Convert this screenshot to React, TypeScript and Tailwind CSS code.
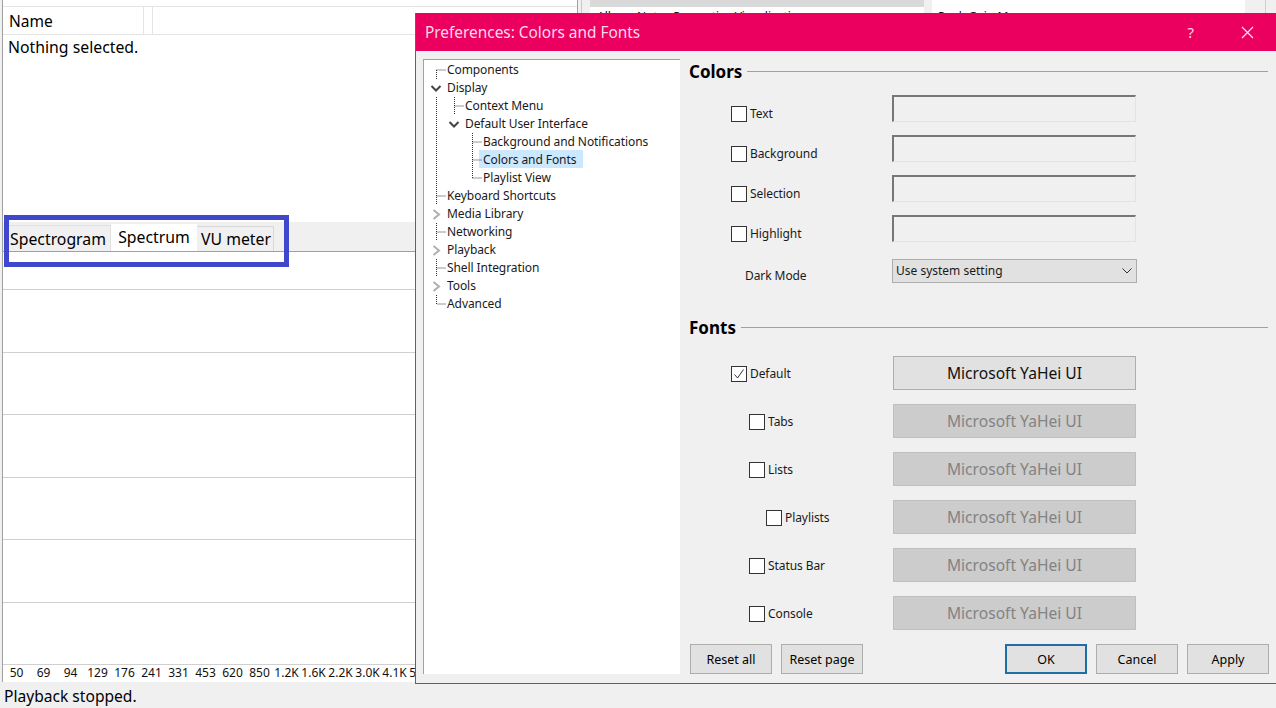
import React from "react";

const uiFont = "font-['Noto_Sans','Open_Sans',sans-serif]";

const gridRows = [38, 63, 62, 63, 62, 63, 62];
const axisLabels = ["50", "69", "94", "129", "176", "241", "331", "453", "620", "850", "1.2K", "1.6K", "2.2K", "3.0K", "4.1K", "5.6K"];

const treeItems = [
  { label: "Components", pad: "pl-[20px]" },
  { label: "Display", pad: "pl-[20px]" },
  { label: "Context Menu", pad: "pl-[38px]" },
  { label: "Default User Interface", pad: "pl-[38px]" },
  { label: "Background and Notifications", pad: "pl-[56px]" },
  { label: "Colors and Fonts", pad: "pl-[56px]", selected: true },
  { label: "Playlist View", pad: "pl-[56px]" },
  { label: "Keyboard Shortcuts", pad: "pl-[20px]" },
  { label: "Media Library", pad: "pl-[20px]" },
  { label: "Networking", pad: "pl-[20px]" },
  { label: "Playback", pad: "pl-[20px]" },
  { label: "Shell Integration", pad: "pl-[20px]" },
  { label: "Tools", pad: "pl-[20px]" },
  { label: "Advanced", pad: "pl-[20px]" },
];

const colorRows = ["Text", "Background", "Selection", "Highlight"];

const fontRows = [
  { label: "Default", pad: "pl-[51px]", checked: true },
  { label: "Tabs", pad: "pl-[69px]" },
  { label: "Lists", pad: "pl-[69px]" },
  { label: "Playlists", pad: "pl-[86px]" },
  { label: "Status Bar", pad: "pl-[69px]" },
  { label: "Console", pad: "pl-[69px]" },
];

const CheckBox = ({ checked = false }: { checked?: boolean }) => (
  <span className="flex h-4 w-4 shrink-0 items-center justify-center border border-[#333] bg-white">
    {checked && (
      <svg width="12" height="12" viewBox="0 0 12 12" fill="none">
        <path d="M1.5 6.5 L4.5 10 L10.5 1.5" stroke="#333" strokeWidth="1" />
      </svg>
    )}
  </span>
);

// dotted guides and expanders of the preferences tree, coordinates are inside the tree box
const TreeGuides = () => (
  <svg className="absolute left-0 top-0" width="100" height="260" fill="none">
    <g stroke="#333" strokeWidth="1" strokeDasharray="1 1">
      <path d="M12.5 10 V19 M12.5 10 H22" />
      <path d="M12.5 37 V145 M12.5 136 H22" />
      <path d="M12.5 163 V181 M12.5 172 H22" />
      <path d="M12.5 199 V217 M12.5 208 H22" />
      <path d="M12.5 235 V244 H22" />
      <path d="M30.5 37 V55 M30.5 46 H40" />
      <path d="M48.5 73 V118 M48.5 82 H58 M48.5 100 H58 M48.5 118 H58" />
    </g>
    <path d="M7.5 26 L12 30.5 L16.5 26" stroke="#444" strokeWidth="2" />
    <path d="M25.5 62 L30 66.5 L34.5 62" stroke="#444" strokeWidth="2" />
    <path d="M9.5 150 L15 154.5 L9.5 159" stroke="#b0b0b0" strokeWidth="2" />
    <path d="M9.5 186 L15 190.5 L9.5 195" stroke="#b0b0b0" strokeWidth="2" />
    <path d="M9.5 222 L15 226.5 L9.5 231" stroke="#b0b0b0" strokeWidth="2" />
  </svg>
);

const SectionTitle = ({ title }: { title: string }) => (
  <div className="flex h-6 items-center gap-[5px] pl-[9px] pr-2">
    <span className="text-[17px] font-bold leading-none tracking-normal text-black">{title}</span>
    <span className="h-px flex-1 bg-[#a0a0a0]" />
  </div>
);

const DialogButton = ({ label, focused = false }: { label: string; focused?: boolean }) => (
  <button
    className={`h-[30px] w-[82px] bg-[#e1e1e1] pt-[2px] text-[12.5px] tracking-normal text-black ${
      focused ? "border-2 border-[#1f6ea8]" : "border border-[#adadad]"
    }`}
  >
    {label}
  </button>
);

const Preferences = () => (
  <div className="absolute left-[415px] top-[13px] flex h-[671px] w-[861px] flex-col overflow-hidden border-b border-l border-[#b8336f] bg-[#f0f0f0] text-[12px] tracking-[-0.08px] text-[#1a1a1a]">
    <div className="flex h-[38px] shrink-0 items-center bg-[#eb005f] pl-[9px] tracking-normal text-white">
      <span className="flex-1 pt-[1px] text-[15.4px] text-[#ffd9e8]">Preferences: Colors and Fonts</span>
      <span className="mr-[47px] text-[15px] text-[#ffd9e8]">?</span>
      <svg className="mr-[22px]" width="13" height="13" viewBox="0 0 13 13" fill="none">
        <path d="M1 1 L12 12 M12 1 L1 12" stroke="#ffe5ef" strokeWidth="1.2" />
      </svg>
    </div>

    <div className="flex flex-1 overflow-hidden">
      <div className="flex w-[264px] shrink-0 pb-[9px] pl-[7px] pt-[8px]">
        <div className="relative flex-1 border-l border-t border-[#a0a0a0] bg-white">
          <TreeGuides />
          {treeItems.map((item) => (
            <div key={item.label} className={`flex h-[18px] items-start ${item.pad}`}>
              <span className={`-ml-[1px] h-[18px] pl-[4px] pt-[1px] leading-[18px] ${item.selected ? "bg-[#cce8ff] pr-[7px]" : "pr-[4px]"}`}>
                {item.label}
              </span>
            </div>
          ))}
        </div>
      </div>

      <div className="flex flex-1 flex-col">
        <div className="pt-[8px]">
          <SectionTitle title="Colors" />
        </div>
        <div className="mt-[12px] flex flex-col">
          {colorRows.map((label) => (
            <div key={label} className="flex h-10">
              <div className="flex h-[38px] w-[212px] shrink-0 items-center gap-[3px] pl-[51px]">
                <CheckBox />
                <span>{label}</span>
              </div>
              <div className="h-[27px] w-[244px] border-b border-l-2 border-r border-t-2 border-b-[#e3e3e3] border-l-[#777] border-r-[#e3e3e3] border-t-[#777]" />
            </div>
          ))}
          <div className="mt-1 flex h-6 items-center">
            <span className="w-[212px] shrink-0 pl-[65px] pt-[10px]">Dark Mode</span>
            <div className="flex h-6 w-[245px] items-center justify-between border border-[#adadad] bg-[#e1e1e1] pl-[3px] pr-[4px] tracking-normal">
              <span>Use system setting</span>
              <svg width="10" height="6" viewBox="0 0 10 6" fill="none">
                <path d="M0.5 0.5 L5 5 L9.5 0.5" stroke="#333" strokeWidth="1" />
              </svg>
            </div>
          </div>
        </div>

        <div className="mt-[32px]">
          <SectionTitle title="Fonts" />
        </div>
        <div className="mt-[17px] flex flex-col">
          {fontRows.map((row) => (
            <div key={row.label} className="flex h-12">
              <div className={`flex h-[36px] w-[213px] shrink-0 items-center gap-[3px] ${row.pad}`}>
                <CheckBox checked={row.checked} />
                <span>{row.label}</span>
              </div>
              <button
                className={`h-[34px] w-[243px] border pt-[2px] text-[15.6px] tracking-normal ${
                  row.checked
                    ? "border-[#adadad] bg-[#e1e1e1] text-[#111]"
                    : "border-[#bfbfbf] bg-[#cccccc] text-[#838383]"
                }`}
              >
                Microsoft YaHei UI
              </button>
            </div>
          ))}
        </div>

        <div className="flex items-center pl-[10px] pr-[7px]">
          <div className="flex gap-[9px]">
            <DialogButton label="Reset all" />
            <DialogButton label="Reset page" />
          </div>
          <div className="ml-[142px] flex gap-[9px]">
            <DialogButton label="OK" focused />
            <DialogButton label="Cancel" />
            <DialogButton label="Apply" />
          </div>
        </div>
      </div>
    </div>
  </div>
);

const App = () => {
  return (
    <div className={`relative flex h-[708px] w-[1276px] flex-col overflow-hidden bg-[#f0f0f0] ${uiFont}`}>
      <div className="flex h-[682px]">
        {/* Playlist side */}
        <div className="ml-[2px] flex w-[576px] shrink-0 flex-col border-l border-r border-[#a0a0a0] bg-white text-black">
          <div className="h-[7px] shrink-0 border-b border-[#e5e5e5]" />
          <div className="flex h-[28px] shrink-0 items-center border-b border-[#e5e5e5]">
            <div className="flex h-full w-[141px] items-center border-r border-[#e5e5e5] pl-[6px] pt-[2px] text-[15.5px]">Name</div>
            <div className="h-full w-[9px] border-r border-[#e5e5e5]" />
          </div>
          <div className="h-[187px] shrink-0 pl-[5px] text-[15.8px] leading-[24px]">Nothing selected.</div>

          <div className="flex h-[30px] shrink-0 items-end border-b border-[#a0a0a0] bg-[#f0f0f0] pl-[3px] text-[15.8px]">
            <div className="flex h-[26px] w-[105px] items-center justify-center border-r border-t border-[#e0e0e0] pt-[2px]">Spectrogram</div>
            <div className="flex h-[27px] w-[86px] items-center justify-center bg-white">Spectrum</div>
            <div className="flex h-[25px] w-[77px] items-center justify-center border-r border-t border-[#d8d8d8] pl-[2px] pt-[2px]">VU meter</div>
          </div>

          <div className="flex flex-1 flex-col">
            {gridRows.map((height, i) => (
              <div key={i} className="shrink-0 border-b border-[#d0d0d0]" style={{ height }} />
            ))}
            <div className="flex h-[17px] whitespace-nowrap text-[12px] leading-[15px] text-[#111]">
              {axisLabels.map((label) => (
                <span key={label} className="w-[27px] shrink-0 text-center">
                  {label}
                </span>
              ))}
            </div>
          </div>
        </div>
        <div className="ml-[3px] w-px shrink-0 bg-[#c8c8c8]" />

        {/* Panels hidden behind the dialog */}
        <div className="ml-[8px] h-[682px] w-[334px] shrink-0 bg-white text-[12px]">
          <div className="h-[7px] bg-[#d9d9d9]" />
          <div className="pl-[7px] pt-[1px] text-[#111]">Album  Notes  Properties  Visualization</div>
        </div>
        <div className="ml-[8px] h-[682px] w-[313px] shrink-0 bg-white pl-[6px] pt-[8px] text-[12px] text-[#111]">
          Peak Gain Memory
        </div>
        <div className="ml-[20px] w-px bg-[#d0d0d0]" />
      </div>

      <div className="flex h-[26px] items-center pl-[4px] pt-[3px] text-[15.6px] text-black">Playback stopped.</div>

      <Preferences />

      {/* annotation box drawn over the tabs */}
      <div className="absolute left-[4px] top-[215px] h-[52px] w-[285px] border-[5px] border-[#3f48cc]" />
    </div>
  );
};

export default App;
